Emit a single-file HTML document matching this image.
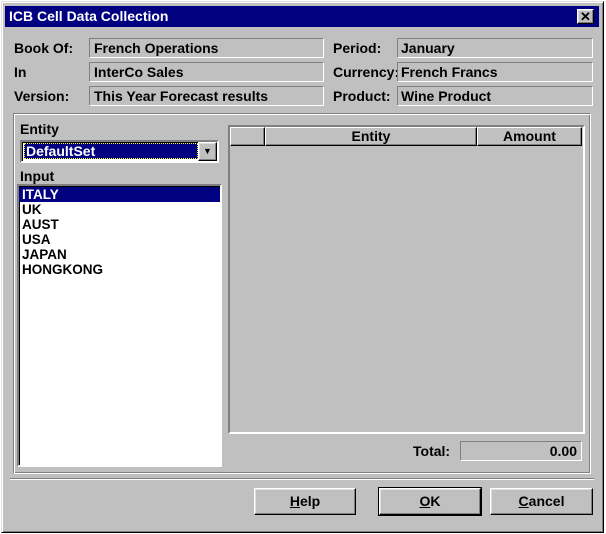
<!DOCTYPE html>
<html><head><style>
*{box-sizing:border-box;margin:0;padding:0}
body{width:606px;height:534px;background:#fff;font-family:"Liberation Sans",sans-serif;font-weight:bold;font-size:14px;color:#000;position:relative;overflow:hidden}
.a{position:absolute}
.win{left:1px;top:1px;width:603px;height:532px;background:#c0c0c0;border:1px solid;border-color:#dfdfdf #000 #000 #dfdfdf;box-shadow:inset 1px 1px #fff,inset -1px -1px #808080}
.title{left:5px;top:6px;width:594px;height:21px;background:#000080;color:#fff;font-size:14px;padding:2px 4px}
.fld{border:1px solid;border-color:#808080 #fff #fff #808080;padding:1px 4px;height:20px;line-height:16px}
.sunk{border:2px solid;border-color:#808080 #fff #fff #808080;box-shadow:inset 1px 1px #000}
.btn{background:#c0c0c0;border:1px solid;border-color:#fff #000 #000 #fff;box-shadow:inset -1px -1px #808080,inset 1px 1px #dfdfdf;text-align:center;line-height:24px;font-size:14px}
.hd{top:0;height:19px;border:1px solid;border-color:#fff #000 #000 #fff;box-shadow:inset -1px -1px #808080;text-align:center;line-height:17px;font-size:14px;background:#c0c0c0}
u{text-decoration:underline}
</style></head><body>
<div class="a win"></div>
<div class="a title">ICB Cell Data Collection</div>
<div class="a btn" style="left:577px;top:9px;width:17px;height:15px;line-height:13px;font-size:13px">✕</div>

<div class="a" style="left:14px;top:40px">Book Of:</div>
<div class="a" style="left:14px;top:64px">In</div>
<div class="a" style="left:14px;top:88px">Version:</div>
<div class="a fld" style="left:89px;top:38px;width:235px">French Operations</div>
<div class="a fld" style="left:89px;top:62px;width:235px">InterCo Sales</div>
<div class="a fld" style="left:89px;top:86px;width:235px">This Year Forecast results</div>
<div class="a" style="left:333px;top:40px">Period:</div>
<div class="a" style="left:333px;top:64px">Currency:</div>
<div class="a" style="left:333px;top:88px">Product:</div>
<div class="a fld" style="left:397px;top:38px;width:196px;padding-left:3px">January</div>
<div class="a fld" style="left:397px;top:62px;width:196px;padding-left:3px">French Francs</div>
<div class="a fld" style="left:397px;top:86px;width:196px;padding-left:3px">Wine Product</div>

<div class="a" style="left:13px;top:113px;width:578px;height:361px;border:1px solid;border-color:#808080 #fff #fff #808080;box-shadow:inset 1px 1px #fff,inset -1px -1px #808080"></div>
<div class="a" style="left:20px;top:121px">Entity</div>
<div class="a sunk" style="left:20px;top:140px;width:199px;height:23px;background:#fff">
 <div class="a" style="left:2px;top:1px;width:174px;height:16px;background:#000080;color:#fff;padding-left:2px;line-height:16px;font-size:14px;outline:1px dotted #ff0;outline-offset:-1px">DefaultSet</div>
 <div class="a btn" style="left:176px;top:0;width:19px;height:19px;line-height:17px;font-size:9px">▼</div>
</div>
<div class="a" style="left:20px;top:168px">Input</div>
<div class="a sunk" style="left:17px;top:184px;width:205px;height:283px;background:#fff;font-size:13.5px;line-height:15px;padding:1px 0">
 <div style="background:#000080;color:#fff;padding-left:3px">ITALY</div>
 <div style="padding-left:3px">UK</div>
 <div style="padding-left:3px">AUST</div>
 <div style="padding-left:3px">USA</div>
 <div style="padding-left:3px">JAPAN</div>
 <div style="padding-left:3px">HONGKONG</div>
</div>

<div class="a sunk" style="left:228px;top:125px;width:357px;height:309px;background:#c0c0c0;box-shadow:none;border-color:#808080 #fff #fff #808080">
 <div class="a hd" style="left:0;width:35px"></div>
 <div class="a hd" style="left:35px;width:212px">Entity</div>
 <div class="a hd" style="left:247px;width:105px">Amount</div>
</div>
<div class="a" style="left:413px;top:443px">Total:</div>
<div class="a fld" style="left:460px;top:441px;width:122px;text-align:right">0.00</div>

<div class="a" style="left:10px;top:478px;width:584px;height:2px;border-top:1px solid #808080;border-bottom:1px solid #fff"></div>
<div class="a btn" style="left:254px;top:488px;width:102px;height:27px"><u>H</u>elp</div>
<div class="a btn" style="left:379px;top:488px;width:102px;height:27px;outline:1px solid #000"><u>O</u>K</div>
<div class="a btn" style="left:490px;top:488px;width:103px;height:27px"><u>C</u>ancel</div>
</body></html>
